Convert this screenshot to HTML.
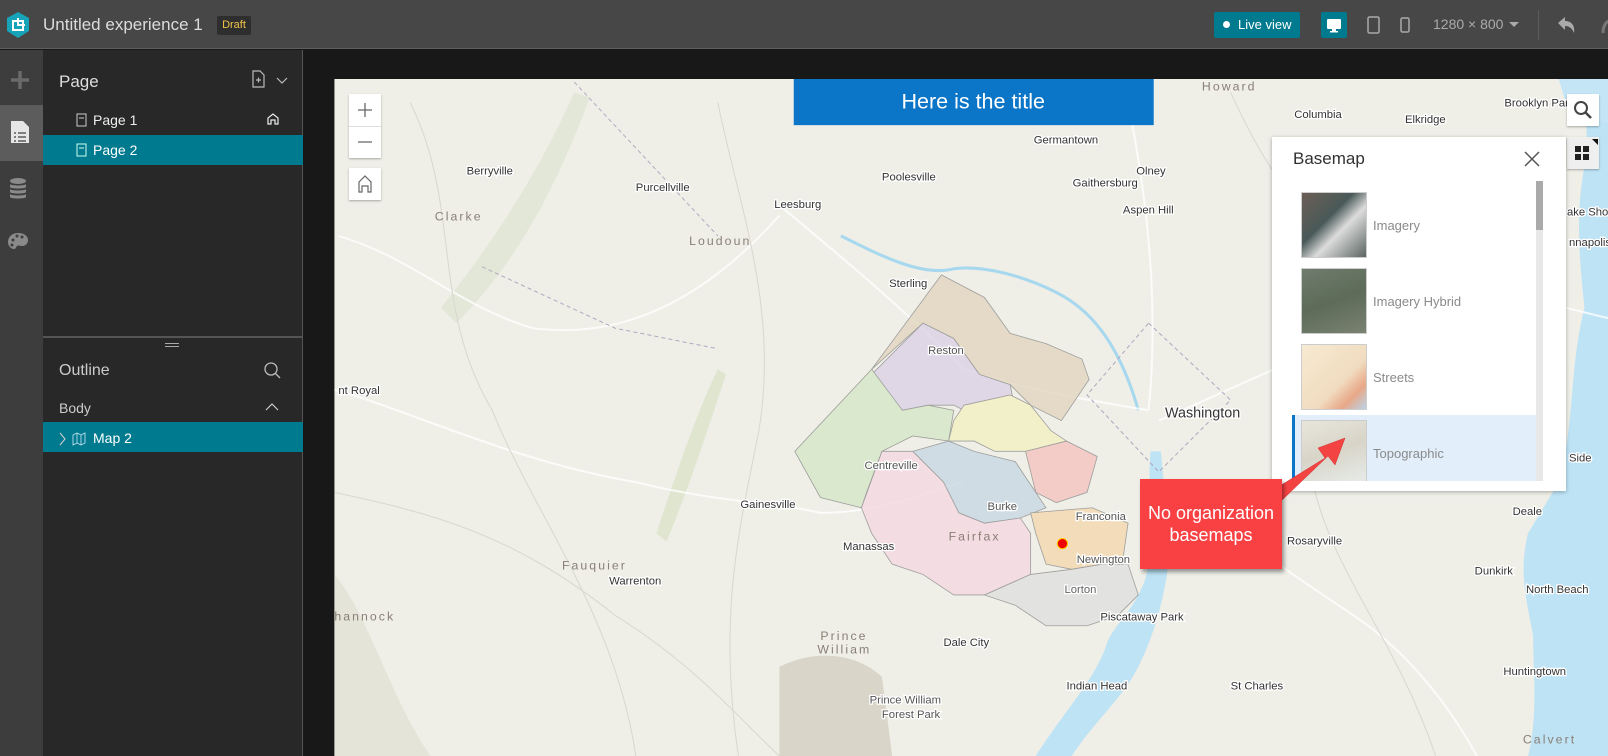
<!DOCTYPE html>
<html><head><meta charset="utf-8">
<style>
*{margin:0;padding:0;box-sizing:border-box}
body{width:1608px;height:756px;overflow:hidden;background:#181818;font-family:"Liberation Sans",sans-serif;position:relative}
.abs{position:absolute}
#top{left:0;top:0;width:1608px;height:49px;background:#474747;border-bottom:1px solid #5e5e5e}
#strip{left:0;top:50px;width:43px;height:706px;background:#3d3d3d}
#panel{left:43px;top:50px;width:260px;height:706px;background:#282828;border-right:1px solid #555}
.t{color:#ddd;white-space:nowrap}
.row{position:absolute;left:0;width:260px;height:30px}
.sel{background:#007a8f}
.mbtn{position:absolute;background:#fff;box-shadow:0 1px 2px rgba(0,0,0,.3)}
</style></head><body>

<svg class="abs" style="left:0;top:0" width="1608" height="756" viewBox="0 0 1568 737" preserveAspectRatio="none">
<defs><clipPath id="mc"><rect x="326" y="77" width="1242" height="660"/></clipPath></defs>
<g clip-path="url(#mc)">
<rect x="326" y="77" width="1242" height="660" fill="#efefe8"/>
<path d="M326 560 C360 600 380 680 420 737 L326 737Z" fill="#e4e4d9"/>
<path d="M430 300 C470 250 520 180 560 90 L575 95 C540 190 500 260 445 315Z" fill="#e0e5d3" opacity=".8"/>
<path d="M640 520 C660 460 680 400 700 360 L708 365 C690 420 670 480 650 528Z" fill="#e0e5d0"/>
<path d="M760 650 C800 630 840 640 860 660 L870 737 L760 737Z" fill="#d9d6c9"/>
<path d="M1545 80 L1568 80 L1568 737 L1490 737 C1500 700 1495 650 1495 620 C1490 590 1480 560 1490 520 L1520 470 C1535 420 1530 360 1545 300 C1540 250 1535 200 1548 150Z" fill="#bde3f5"/>
<path d="M1520 77 L1568 77 L1568 120 L1530 110Z" fill="#c3e5f5"/>
<path d="M1122 440 C1118 480 1128 520 1118 560 C1110 590 1090 605 1080 625 C1070 660 1040 690 1010 737 L1045 737 C1070 700 1095 680 1110 650 C1125 620 1133 590 1138 560 C1142 520 1135 480 1132 440Z" fill="#bde3f5"/>
<path d="M820 230 C860 250 900 270 930 262 C960 258 1000 270 1030 285 C1060 300 1090 330 1110 400" stroke="#a8d8ee" stroke-width="3" fill="none"/>
<g stroke="#fff" stroke-width="2" fill="none" opacity=".75">
<path d="M326 380 C400 400 500 450 620 470 C700 490 760 490 800 500 C860 500 900 480 940 470"/>
<path d="M330 230 C400 250 450 300 520 320 C600 330 680 300 760 210"/>
<path d="M760 200 C820 250 880 300 940 360 C1000 380 1060 390 1120 400"/>
<path d="M1130 410 C1200 380 1300 330 1400 300 C1480 280 1520 300 1568 310"/>
<path d="M1120 400 C1130 300 1120 200 1100 100"/>
<path d="M1160 480 C1200 520 1260 560 1320 600 C1380 640 1420 700 1440 737"/>
</g>
<g stroke="#d8d8d0" stroke-width="1" fill="none">
<path d="M400 100 C450 200 420 300 480 400 C520 500 600 600 620 737"/>
<path d="M700 100 C720 200 760 300 740 420 C720 520 700 600 720 737"/>
<path d="M326 480 C420 500 500 520 600 600 C680 650 720 700 760 737"/>
<path d="M1200 90 C1250 200 1300 250 1380 260 C1440 270 1480 300 1520 400"/>
<path d="M1280 470 C1300 560 1360 620 1400 737"/>
</g>
<g stroke="#b0a8c0" stroke-width="1" stroke-dasharray="4 3" fill="none">
<path d="M1120 315 L1200 390 L1130 460 L1060 385Z"/>
<path d="M470 260 L600 320 L700 340"/>
<path d="M560 80 L700 230"/>
</g>
<g stroke="#8c8c8c" stroke-width=".8" opacity=".8">
<path d="M918,268 960,290 985,325 1020,335 1055,350 1062,370 1035,410 1005,395 985,375 955,365 930,330 900,315 850,360Z" fill="#e2d6c0"/>
<path d="M900,315 930,330 955,365 985,375 990,400 975,415 950,405 930,395 905,395 880,400 850,365Z" fill="#ddd2e6"/>
<path d="M850,360 880,400 905,395 930,400 925,430 890,425 860,440 845,480 840,495 800,485 775,440Z" fill="#d6e8c8"/>
<path d="M940,395 985,385 1005,395 1025,420 1040,430 1000,440 970,440 950,430 925,430 930,410Z" fill="#f3f1c2"/>
<path d="M1000,440 1040,430 1070,445 1060,480 1030,490 1010,480Z" fill="#f4c4c0"/>
<path d="M890,440 925,430 950,440 990,450 1010,480 1020,495 995,505 960,510 935,500 920,470Z" fill="#c8d8e4"/>
<path d="M840,495 860,440 890,440 920,470 935,500 960,510 995,505 1005,520 1005,560 960,580 930,580 900,560 870,550 850,520Z" fill="#f6d8e2"/>
<path d="M1005,500 1065,495 1100,510 1095,545 1075,550 1045,555 1020,550 1010,520Z" fill="#f5d8ae"/>
<path d="M1005,560 1045,555 1075,550 1100,550 1110,580 1090,600 1060,610 1020,610 990,590 960,580Z" fill="#e0e0e0"/>
</g>
<circle cx="1036" cy="530" r="5" fill="#e00" stroke="#fc0" stroke-width="1"/>
<g font-family="Liberation Sans,sans-serif" font-size="11" fill="#333" stroke="#fff" stroke-width="2.5" paint-order="stroke">
<text x="455" y="170">Berryville</text><text x="620" y="186">Purcellville</text><text x="755" y="203">Leesburg</text>
<text x="1008" y="140">Germantown</text><text x="860" y="176">Poolesville</text><text x="1046" y="182">Gaithersburg</text>
<text x="1108" y="170">Olney</text><text x="1095" y="208">Aspen Hill</text><text x="867" y="280">Sterling</text>
<text x="1262" y="115">Columbia</text><text x="1370" y="120">Elkridge</text><text x="1467" y="104">Brooklyn Park</text>
<text x="1136" y="407" font-size="14">Washington</text><text x="722" y="495">Gainesville</text>
<text x="822" y="536">Manassas</text><text x="594" y="570">Warrenton</text><text x="920" y="630">Dale City</text>
<text x="1040" y="672">Indian Head</text><text x="1200" y="672">St Charles</text><text x="1073" y="605">Piscataway Park</text>
<text x="1255" y="531">Rosaryville</text><text x="1475" y="502">Deale</text><text x="1438" y="560">Dunkirk</text>
<text x="1488" y="578">North Beach</text><text x="1466" y="658">Huntingtown</text><text x="330" y="384">nt Royal</text>
<text x="1530" y="450">Side</text><text x="1530" y="240">nnapolis</text><text x="1528" y="210">ake Shore</text>
<text x="1038" y="578" fill="#666">Lorton</text><text x="1050" y="549" fill="#555">Newington</text><text x="1049" y="507" fill="#555">Franconia</text>
<text x="963" y="497" fill="#555">Burke</text><text x="905" y="345" fill="#555">Reston</text><text x="843" y="457" fill="#555">Centreville</text>
<text x="848" y="686" fill="#555">Prince William</text><text x="860" y="700" fill="#555">Forest Park</text>
</g>
<g font-family="Liberation Sans,sans-serif" font-size="12" fill="#8a7f75" letter-spacing="2">
<text x="424" y="215">Clarke</text><text x="672" y="239">Loudoun</text><text x="548" y="555">Fauquier</text>
<text x="326" y="605">hannock</text><text x="800" y="624">Prince</text><text x="797" y="637">William</text><text x="925" y="527">Fairfax</text>
<text x="1172" y="88">Howard</text><text x="1485" y="725">Calvert</text>
</g>
<rect x="774" y="77" width="351" height="45" fill="#0b75c8"/>
<text x="949" y="106" text-anchor="middle" font-family="Liberation Sans,sans-serif" font-size="21" fill="#fff">Here is the title</text>
</g>
</svg>

<div class="mbtn" style="left:349px;top:94px;width:32px;height:64px"></div>
<div class="abs" style="left:349px;top:126px;width:32px;height:1px;background:#ddd"></div>
<svg class="abs" style="left:349px;top:94px" width="32" height="64"><path d="M9 16H23M16 9V23M9 48H23" stroke="#666" stroke-width="1.3"/></svg>
<div class="mbtn" style="left:349px;top:168px;width:32px;height:32px"></div>
<svg class="abs" style="left:349px;top:168px" width="32" height="32"><path d="M10 24V14L16 8L22 14V24H19V18H13V24Z" fill="none" stroke="#666" stroke-width="1.2"/></svg>
<div class="mbtn" style="left:1567px;top:94px;width:32px;height:32px"></div>
<svg class="abs" style="left:1567px;top:94px" width="32" height="32"><circle cx="14" cy="14" r="6" fill="none" stroke="#444" stroke-width="2"/><path d="M18 18L24 24" stroke="#444" stroke-width="2.5"/></svg>
<div class="mbtn" style="left:1567px;top:137px;width:32px;height:32px;background:#efefef"></div>
<svg class="abs" style="left:1567px;top:137px" width="32" height="32"><rect x="8" y="9" width="6" height="6" fill="#222"/><rect x="16" y="9" width="6" height="6" fill="#222"/><rect x="8" y="17" width="6" height="6" fill="#222"/><rect x="16" y="17" width="6" height="6" fill="#222"/><path d="M25 2H31V8Z" fill="#111"/></svg>

<div class="abs" style="left:1272px;top:137px;width:294px;height:354px;background:#fff;box-shadow:0 1px 4px rgba(0,0,0,.3)">
 <div class="abs" style="left:21px;top:12px;font-size:17px;color:#323232">Basemap</div>
 <svg class="abs" style="left:250px;top:12px" width="20" height="20"><path d="M3 3L17 17M17 3L3 17" stroke="#555" stroke-width="1.5"/></svg>
 <div class="abs" style="left:264px;top:44px;width:7px;height:300px;background:#e8e8e8"></div>
 <div class="abs" style="left:264px;top:44px;width:7px;height:49px;background:#aaa"></div>
 <div class="abs" style="left:20px;top:278px;width:244px;height:66px;background:#e2effa;border-left:3px solid #0b75c8"></div>
 <div class="abs" style="left:29px;top:55px;width:66px;height:66px;background:linear-gradient(135deg,#6b5e56 0%,#4a5a58 40%,#dcdcdc 60%,#5a6460 100%);border:1px solid #ccc"></div>
 <div class="abs" style="left:29px;top:131px;width:66px;height:66px;background:linear-gradient(160deg,#6f7c6e,#5d6b58 50%,#7a8272);border:1px solid #ccc"></div>
 <div class="abs" style="left:29px;top:207px;width:66px;height:66px;background:linear-gradient(135deg,#f6ead2,#f1dcc0 60%,#e8a888 80%,#b9d4e8);border:1px solid #ccc"></div>
 <div class="abs" style="left:29px;top:283px;width:66px;height:61px;background:linear-gradient(160deg,#e8e6dc,#d8d4c8 50%,#e6ebe8);border:1px solid #ccc;border-bottom:none"></div>
 <div class="abs" style="left:101px;top:81px;font-size:13px;color:#8a8a8a">Imagery</div>
 <div class="abs" style="left:101px;top:157px;font-size:13px;color:#8a8a8a">Imagery Hybrid</div>
 <div class="abs" style="left:101px;top:233px;font-size:13px;color:#8a8a8a">Streets</div>
 <div class="abs" style="left:101px;top:309px;font-size:13px;color:#8a8a8a">Topographic</div>
</div>

<svg class="abs" style="left:1130px;top:420px" width="240" height="160"><path d="M140 72L195 38L188 28L215 18L205 45L198 36L148 84Z" fill="#f44343" stroke="#c33" stroke-width=".5"/></svg>
<div class="abs" style="left:1140px;top:479px;width:142px;height:90px;background:#f94144;box-shadow:2px 3px 4px rgba(0,0,0,.4);color:#fff;font-size:18px;line-height:22px;text-align:center;padding-top:23px">No organization<br>basemaps</div>

<div id="top" class="abs"></div>
<svg class="abs" style="left:6px;top:12px" width="24" height="26"><path d="M12 0L23 6V19L12 26L1 19V6Z" fill="#17a3b8"/><path d="M7 9H17V18H7Z" fill="none" stroke="#fff" stroke-width="2"/><path d="M12 6V13H19" fill="none" stroke="#fff" stroke-width="2"/></svg>
<div class="abs t" style="left:43px;top:15px;font-size:17px;color:#dcdcdc">Untitled experience 1</div>
<div class="abs" style="left:217px;top:16px;width:34px;height:19px;background:#2e2e2e;border-radius:2px;color:#f0c34a;font-size:11px;text-align:center;line-height:19px">Draft</div>
<div class="abs" style="left:1214px;top:12px;width:86px;height:26px;background:#007a8f;border-radius:2px"></div>
<div class="abs" style="left:1223px;top:21px;width:7px;height:7px;border-radius:50%;background:#fff"></div>
<div class="abs t" style="left:1238px;top:17px;font-size:13px;color:#fff">Live view</div>
<div class="abs" style="left:1321px;top:12px;width:26px;height:26px;background:#007a8f;border-radius:2px"></div>
<svg class="abs" style="left:1321px;top:12px" width="26" height="26"><rect x="6" y="7" width="14" height="10" rx="1" fill="#fff"/><rect x="11" y="17" width="4" height="3" fill="#fff"/><rect x="9" y="19" width="8" height="1.5" fill="#fff"/></svg>
<svg class="abs" style="left:1360px;top:12px" width="26" height="26"><rect x="8" y="5" width="11" height="16" rx="1.5" fill="none" stroke="#aaa" stroke-width="1.5"/></svg>
<svg class="abs" style="left:1392px;top:12px" width="26" height="26"><rect x="9" y="6" width="8" height="14" rx="1.5" fill="none" stroke="#aaa" stroke-width="1.5"/></svg>
<div class="abs t" style="left:1433px;top:16px;font-size:14px;color:#aaa">1280 × 800</div>
<svg class="abs" style="left:1508px;top:20px" width="12" height="10"><path d="M1 2H11L6 7Z" fill="#aaa"/></svg>
<div class="abs" style="left:1538px;top:10px;width:1px;height:30px;background:#5a5a5a"></div>
<svg class="abs" style="left:1554px;top:14px" width="24" height="22"><path d="M4 9L11 3V7C18 7 21 12 20 19C18 14 15 12 11 12V16Z" fill="#aaa"/></svg>
<svg class="abs" style="left:1595px;top:14px" width="13" height="22"><path d="M8 19C8 12 11 8 14 7" stroke="#777" stroke-width="3" fill="none"/></svg>

<div id="strip" class="abs"></div>
<div class="abs" style="left:0;top:105px;width:43px;height:56px;background:#5c5c5c"></div>
<svg class="abs" style="left:0;top:50px" width="43" height="220">
<path d="M11 30H29M20 21V39" stroke="#6a6a6a" stroke-width="3.5"/>
<path d="M11 71H23L29 77V93H11Z" fill="#e6e6e6"/><path d="M14 83h2M18 83h8M14 87h2M18 87h8M14 91h2M18 91h8" stroke="#5c5c5c" stroke-width="1.5"/>
<ellipse cx="18" cy="131" rx="8" ry="3" fill="#8a8a8a"/><path d="M10 134v3c0 2 16 2 16 0v-3c0 2-16 2-16 0zM10 139v3c0 2 16 2 16 0v-3c0 2-16 2-16 0zM10 144v3c0 2 16 2 16 0v-3c0 2-16 2-16 0z" fill="#8a8a8a"/>
<path d="M18 183c-6 0-10 4-10 9 0 4 3 7 6 7 2 0 2-2 3-3 1-1 3 0 5 0 4 0 6-3 6-6 0-4-4-7-10-7z" fill="#8a8a8a"/><circle cx="13" cy="190" r="1.5" fill="#3d3d3d"/><circle cx="17" cy="186" r="1.5" fill="#3d3d3d"/><circle cx="22" cy="187" r="1.5" fill="#3d3d3d"/><circle cx="12" cy="195" r="1.5" fill="#3d3d3d"/>
</svg>

<div id="panel" class="abs">
 <div class="abs t" style="left:16px;top:22px;font-size:17px">Page</div>
 <svg class="abs" style="left:207px;top:20px" width="40" height="20"><path d="M3 1H10L14 5V17H3Z" fill="none" stroke="#bbb" stroke-width="1.2"/><path d="M6 10H11M8.5 7.5V12.5" stroke="#bbb" stroke-width="1.2"/><path d="M27 8L32 13L37 8" fill="none" stroke="#bbb" stroke-width="1.2"/></svg>
 <svg class="abs" style="left:33px;top:63px" width="12" height="14"><rect x="1" y="1" width="9" height="12" fill="none" stroke="#ccc"/><path d="M3 5H8" stroke="#ccc"/></svg>
 <div class="abs t" style="left:50px;top:62px;font-size:14px;color:#eee">Page 1</div>
 <svg class="abs" style="left:223px;top:62px" width="14" height="14"><path d="M2 12V6L7 2L12 6V12H9V8H5V12Z" fill="none" stroke="#eee" stroke-width="1.2"/></svg>
 <div class="row sel" style="top:85px"></div>
 <svg class="abs" style="left:33px;top:93px" width="12" height="14"><rect x="1" y="1" width="9" height="12" fill="none" stroke="#cfe"/><path d="M3 5H8" stroke="#cfe"/></svg>
 <div class="abs t" style="left:50px;top:92px;font-size:14px;color:#fff">Page 2</div>
 <div class="abs" style="left:0;top:286px;width:260px;height:2px;background:#555"></div>
 <div class="abs" style="left:122px;top:293px;width:14px;height:1px;background:#aaa"></div>
 <div class="abs" style="left:122px;top:296px;width:14px;height:1px;background:#aaa"></div>
 <div class="abs t" style="left:16px;top:312px;font-size:16px;color:#ccc">Outline</div>
 <svg class="abs" style="left:220px;top:311px" width="20" height="20"><circle cx="8" cy="8" r="6" fill="none" stroke="#bbb" stroke-width="1.3"/><path d="M12.5 12.5L17 17" stroke="#bbb" stroke-width="1.3"/></svg>
 <div class="abs t" style="left:16px;top:350px;font-size:14px;color:#ccc">Body</div>
 <svg class="abs" style="left:222px;top:352px" width="14" height="10"><path d="M1 8L7 2L13 8" fill="none" stroke="#ccc" stroke-width="1.2"/></svg>
 <div class="row sel" style="top:372px"></div>
 <svg class="abs" style="left:16px;top:382px" width="30" height="14"><path d="M1 1L6 7L1 13" fill="none" stroke="#ccc" stroke-width="1.1"/><path d="M14 3L18 1L22 3L26 1V11L22 13L18 11L14 13Z M18 1V11M22 3V13" fill="none" stroke="#bde" stroke-width=".9"/></svg>
 <div class="abs t" style="left:50px;top:380px;font-size:14px;color:#fff">Map 2</div>
</div>
</body></html>
